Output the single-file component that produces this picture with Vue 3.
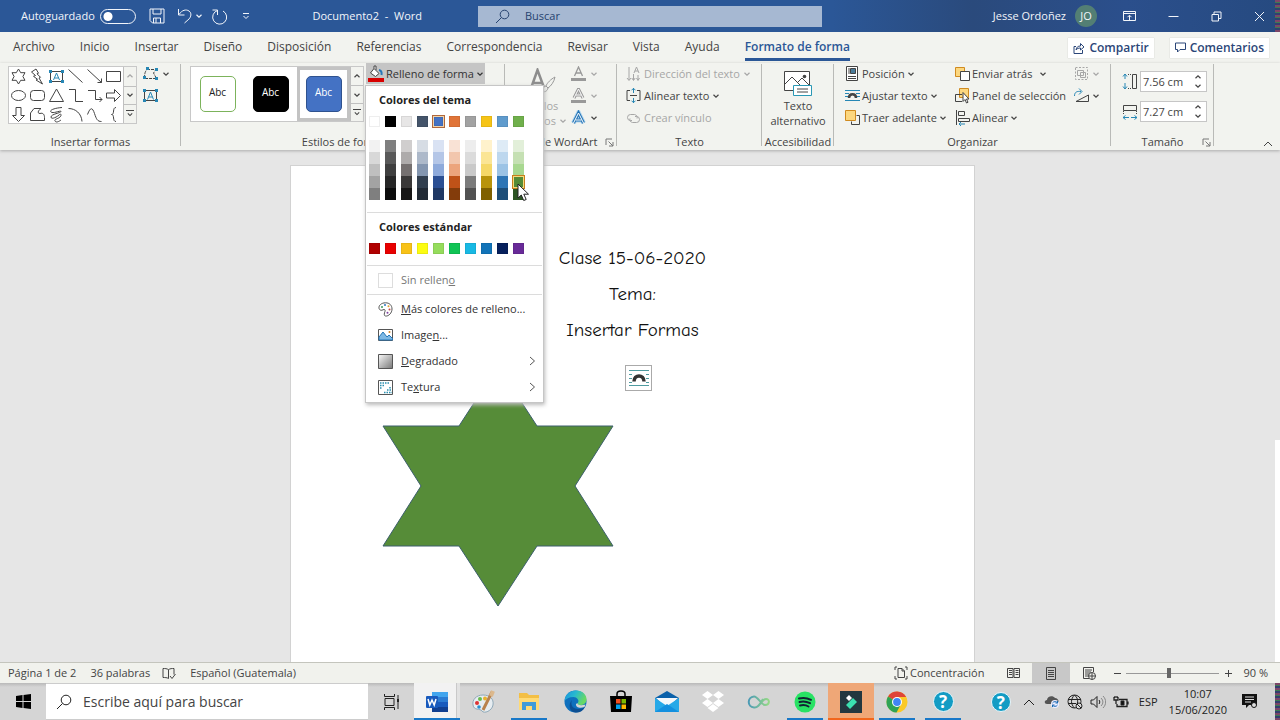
<script setup>
import { h, ref } from 'vue'

const Chev = () =>
  h('svg', { class: 'chev', width: 8, height: 8, viewBox: '0 0 8 8' }, [
    h('path', { d: 'M1.500 2.800 4 5.200 6.500 2.800', fill: 'none', stroke: 'currentColor', 'stroke-width': 1.2 }),
  ])

const Launcher = () =>
  h('svg', { class: 'launcher', width: 9, height: 9, viewBox: '0 0 9 9' }, [
    h('path', { d: 'M1 7V1h6M3.500 3.500 8 8M8 4v4H4', fill: 'none', stroke: 'currentColor' }),
  ])

const tabs = ['Archivo', 'Inicio', 'Insertar', 'Diseño', 'Disposición', 'Referencias', 'Correspondencia', 'Revisar', 'Vista', 'Ayuda', 'Formato de forma']

const shapes = [
  { name: 'Estrella', d: 'M9.500 2l2.200 3.700h4.300l-2.100 3.800 2.100 3.800h-4.300l-2.200 3.700-2.200-3.700H3l2.100-3.800L3 5.700h4.300z' },
  { name: 'Rayo', d: 'M8 2 3.500 5l4 3.500-2 .8 4 3-1.500.7 6.500 4-3.500-6 1.500-.7-3.500-3.500 1.500-.6z' },
  { name: 'Cuadro de texto', box: true },
  { name: 'Línea', d: 'M2.500 2.500l14 13' },
  { name: 'Flecha', d: 'M2.500 2.500l14 13M16.500 11.500v4h-4' },
  { name: 'Rectángulo', d: 'M2.500 4.500h14v10h-14z' },
  { name: 'Elipse', d: 'M2.500 9.500a7 5 0 1 0 14 0a7 5 0 1 0-14 0z' },
  { name: 'Rectángulo redondeado', d: 'M5.500 4.500h8a3 3 0 0 1 3 3v4a3 3 0 0 1-3 3h-8a3 3 0 0 1-3-3v-4a3 3 0 0 1 3-3z' },
  { name: 'Triángulo', d: 'M9.500 3l7 12.500h-14z' },
  { name: 'Conector', d: 'M3 3.500h6.500v12H17' },
  { name: 'Conector de flecha', d: 'M3 4.500h7.500v9H17M14.500 11l2.500 2.500-2.500 2.500' },
  { name: 'Flecha derecha', d: 'M2.500 7h8V3.500l6 6-6 6V12h-8z' },
  { name: 'Flecha abajo', d: 'M7 2.500h5v8h3.500l-6 6-6-6H7z' },
  { name: 'Forma libre', d: 'M2.500 15.500V8l3.500-4.500h7c-3 2-4 5-1 5 3-1 4.500 1 4.500 4v3z' },
  { name: 'Garabato', d: 'M15 2.500C8 3 2 5 4 7s10-2 10-.5S4 9 4 12s6 0 8-2 3 0 1 2-6 2-5 4 4 .500 6-1' },
  { name: 'Arco', d: 'M2.500 3.500c7 0 13 5 13.500 13' },
  { name: 'Curva', d: 'M2.500 9.500c3-8 5-7 7-1s3 8 7 8' },
  { name: 'Llave', d: 'M12 2.500c-4 0-1 7-4.500 7 3.500 0 .500 7 4.500 7' },
]

const theme = ['#ffffff', '#000000', '#e7e6e6', '#44546a', '#4472c4', '#e07438', '#a2a2a2', '#f6c416', '#5f9bcd', '#70b04c']
const shades = [
  ['#f2f2f2', '#d8d8d8', '#bfbfbf', '#a3a3a3', '#7f7f7f'],
  ['#7f7f7f', '#595959', '#3f3f3f', '#262626', '#0c0c0c'],
  ['#d0cece', '#aeabab', '#757070', '#3a3838', '#171616'],
  ['#d6dce4', '#adb9ca', '#8496b0', '#323f4f', '#222a35'],
  ['#d9e2f3', '#b4c6e7', '#8eaadb', '#2b4f93', '#1f3864'],
  ['#f9e2d5', '#f2c6ad', '#eca47c', '#bf5218', '#833c0b'],
  ['#ededed', '#dbdbdb', '#c9c9c9', '#7b7b7b', '#525252'],
  ['#fff2cc', '#fbe595', '#f5d868', '#b8930b', '#7f6000'],
  ['#deebf6', '#bdd7ee', '#9cc3e5', '#2e75b5', '#1e4e79'],
  ['#e2efd9', '#c5e0b3', '#a8d890', '#558b37', '#2c5423'],
]
const standard = ['#b00000', '#e80000', '#f8c218', '#fcfc12', '#95dc5c', '#10c455', '#18b9e4', '#1173b8', '#06205c', '#682a98']

const fileName = ref('Documento2  -  Word')
const alto = ref('7.56 cm')
const ancho = ref('7.27 cm')
const zoom = ref(46)
</script>

<template>
  <div class="window">
    <header class="title">
      <div class="title-left">
        <label class="auto">Autoguardado <input type="checkbox" class="switch" /></label>
        <button aria-label="Guardar" class="tb save">
          <svg width="16" height="16" viewBox="0 0 16 16"><path d="M1 1h14v14H3.500L1 12.500zM4 1v5h8V1M4.500 15v-5h7v5M7 10v5" /></svg>
        </button>
        <button aria-label="Deshacer" class="tb undo">
          <svg width="16" height="16" viewBox="0 0 16 16"><path d="M1.500 1v6h6M2 6.500C5 2 9 1 12 3s2 6 0 8l-4.500 4" /></svg><Chev />
        </button>
        <button aria-label="Rehacer" class="tb redo">
          <svg width="17" height="17" viewBox="0 0 17 17"><path d="M1.500 2h5v5M6.500 2.500A7 7 0 1 0 12 3" /></svg>
        </button>
        <button aria-label="Personalizar" class="tb">
          <svg width="8" height="8" viewBox="0 0 8 8"><path d="M1 1.500h6M1.500 4 4 6.500 6.500 4" /></svg>
        </button>
        <span class="file">{{ fileName }}</span>
      </div>
      <label class="find">
        <svg width="15" height="15" viewBox="0 0 15 15"><circle cx="9.500" cy="5.500" r="4.300" /><path d="M6.500 8.500 1 14" /></svg>
        <input type="search" placeholder="Buscar" aria-label="Buscar" />
      </label>
      <div class="title-right">
        <span>Jesse Ordoñez</span>
        <span class="avatar">JO</span>
        <button class="tb" aria-label="Opciones de la cinta"><svg width="13" height="11" viewBox="0 0 13 11"><path d="M.500.500h12v9H.500zM.500 2.500h12M6.500 9V4.500M4.500 6.200l2-2 2 2" /></svg></button>
        <button class="tb" aria-label="Minimizar"><svg width="11" height="11" viewBox="0 0 11 11"><path d="M.500 5.500h10" /></svg></button>
        <button class="tb" aria-label="Restaurar"><svg width="11" height="11" viewBox="0 0 11 11"><path d="M1 3.500h6.500V10H1zM3 3.500V1h7v6.500H7.500" /></svg></button>
        <button class="tb" aria-label="Cerrar"><svg width="11" height="11" viewBox="0 0 11 11"><path d="M1 1l9 9M10 1l-9 9" /></svg></button>
      </div>
      <i class="edge"></i>
    </header>

    <nav class="tabs">
      <button v-for="t in tabs" :key="t" class="tab" :class="{ active: t === 'Formato de forma' }">{{ t }}</button>
      <div class="share">
        <button>
          <svg width="12" height="12" viewBox="0 0 12 12"><path d="M3 4.500H1v7h8.500V8M3 8c.5-3 2-4 4.500-4V1.500L11 5 7.500 8V6C5.500 6 4 6.500 3 8z" /></svg>Compartir
        </button>
        <button>
          <svg width="11" height="11" viewBox="0 0 11 11"><path d="M.500 1h10v6.500H5L2.500 10V7.500h-2z" /></svg>Comentarios
        </button>
      </div>
    </nav>

    <section class="ribbon">
      <div class="group g-shapes">
        <div class="content">
          <div class="gallery">
            <div class="shapes">
              <button v-for="s in shapes" :key="s.name" :aria-label="s.name">
                <svg width="19" height="19" viewBox="0 0 19 19">
                  <template v-if="s.box">
                    <path d="M3.500 4.500h12v10h-12z" />
                    <path class="blue" d="M6.500 13 9.500 6l3 7M7.500 11h4" />
                    <path class="dots" d="M2 3h3v3H2zM14 3h3v3h-3zM2 13h3v3H2zM14 13h3v3h-3z" />
                  </template>
                  <path v-else :d="s.d" />
                </svg>
              </button>
            </div>
            <div class="scroll">
              <button aria-label="Arriba" class="up off"><Chev /></button>
              <button aria-label="Abajo"><Chev /></button>
              <button aria-label="Más formas" class="more"><Chev /></button>
            </div>
          </div>
          <div class="edit">
            <button class="row" aria-label="Editar forma">
              <svg width="16" height="14" viewBox="0 0 16 14"><path d="M4 2.500h9L10.500 6l3 5.500h-12C1.500 7 2 4.500 4 2.500z" stroke-dasharray="3 1" /><path class="dots" d="M3 0h3v3H3zM12 1h3v3h-3zM0 9h3v3H0zM12 10h3v3h-3z" /></svg><Chev />
            </button>
            <button class="row" aria-label="Dibujar cuadro de texto">
              <svg width="16" height="14" viewBox="0 0 16 14"><path d="M1.500 1.500h12v10h-12z" /><path class="blue" d="M4.500 10.500 7.500 3l3 7.500M5.500 8h4" /><path class="dots" d="M0 0h3v3H0zM12 0h3v3h-3zM0 10h3v3H0zM12 10h3v3h-3z" /></svg>
            </button>
          </div>
        </div>
        <div class="caption"><span>Insertar formas</span></div>
      </div>

      <div class="group g-styles">
        <div class="content">
          <div class="gallery presets">
            <div class="slot"><button class="preset outline">Abc</button></div>
            <div class="slot"><button class="preset black">Abc</button></div>
            <div class="slot chosen"><button class="preset fill">Abc</button></div>
            <div class="scroll">
              <button aria-label="Anterior" class="up"><Chev /></button>
              <button aria-label="Siguiente"><Chev /></button>
              <button aria-label="Más estilos" class="more"><Chev /></button>
            </div>
          </div>
          <div class="filler">
            <button class="fillbtn">
              <svg width="16" height="17" viewBox="0 0 16 17"><path d="M6 3.500 11 8.500 7.500 11.500 2.500 8zM6 3.500V1h2v4" fill="#fff" stroke="#444" /><path d="M11 5c2.500.500 3 2 2.500 5" fill="none" stroke="#2476b8" stroke-width="2" /><path d="M0 13h16v4H0z" fill="#d80000" /></svg>
              Relleno de forma <Chev />
            </button>
            <div class="menu">
              <h3>Colores del tema</h3>
              <div class="swatches">
                <button v-for="(c, i) in theme" :key="c" :aria-label="'Tema ' + (i + 1)" :class="{ picked: i === 4 }" :style="{ background: c }"></button>
              </div>
              <div class="shades">
                <div v-for="(col, i) in shades" :key="i">
                  <button v-for="(c, j) in col" :key="c" :aria-label="'Tono ' + (i + 1) + '.' + (j + 1)" :class="{ hot: i === 9 && j === 3 }" :style="{ background: c }"></button>
                </div>
                <svg class="cursor" width="13" height="19" viewBox="0 0 13 19"><path d="M1 1v14l3.300-3 2.400 5.500 2.500-1-2.400-5.300H11.500z" fill="#fff" stroke="#222" /></svg>
              </div>
              <hr />
              <h3>Colores estándar</h3>
              <div class="swatches std">
                <button v-for="(c, i) in standard" :key="c" :aria-label="'Estándar ' + (i + 1)" :style="{ background: c }"></button>
              </div>
              <hr />
              <button class="item none"><i class="empty"></i><span>Sin rellen<u>o</u></span></button>
              <hr />
              <div class="items">
                <button class="item">
                  <svg width="15" height="15" viewBox="0 0 15 15"><path d="M7.500.800c-4 0-7 2.500-6.500 5.500.5 2 2.500 2.500 4 1.500 1.500-.8 2.500 0 2 1.500-.8 2-1.300 4.500.5 4.700 3 .5 6.500-3 6.500-7 0-3.700-2.500-6.200-6.500-6.200z" fill="#fff" stroke="#555" /><g stroke="none"><circle cx="4" cy="5" r="1" fill="#3a9a5c" /><circle cx="7" cy="3" r="1" fill="#2f78c0" /><circle cx="10.500" cy="4.200" r="1" fill="#e0a030" /><circle cx="11.500" cy="7.500" r="1" fill="#c84040" /><circle cx="9.500" cy="10.800" r="1" fill="#8040a0" /></g></svg>
                  <span><u>M</u>ás colores de relleno...</span>
                </button>
                <button class="item">
                  <svg width="15" height="12" viewBox="0 0 15 12"><path d="M.500.500h14v11H.500z" fill="#fff" stroke="#555" /><path d="M1 8l4-5 4 5 2-2 3.500 3.500V11H1z" fill="#7db8e4" stroke="#2476b8" /><circle cx="11.500" cy="3" r="1" fill="#d08020" /></svg>
                  <span>Image<u>n</u>...</span>
                </button>
                <button class="item">
                  <svg width="15" height="15" viewBox="0 0 15 15"><defs><linearGradient id="gris" x1="0" y1="0" x2="1" y2="1"><stop offset="0" stop-color="#fafafa" /><stop offset="1" stop-color="#777" /></linearGradient></defs><path d="M.500.500h14v14H.500z" fill="url(#gris)" stroke="#555" /></svg>
                  <span><u>D</u>egradado</span><svg class="go" width="7" height="10" viewBox="0 0 7 10"><path d="M1 1l4.500 4L1 9" /></svg>
                </button>
                <button class="item">
                  <svg width="15" height="15" viewBox="0 0 15 15"><path d="M.500.500h14v14H.500z" fill="#fff" stroke="#555" /><path d="M2 3h9M2 5.500h5M2 8h2M12 7v2M9 10h5M6 12.500h8" fill="none" stroke="#2a8fb0" stroke-width="1.500" stroke-dasharray="1.500 1" /></svg>
                  <span>Te<u>x</u>tura</span><svg class="go" width="7" height="10" viewBox="0 0 7 10"><path d="M1 1l4.500 4L1 9" /></svg>
                </button>
              </div>
            </div>
          </div>
        </div>
        <div class="caption"><span>Estilos de forma</span></div>
      </div>

      <div class="group g-art">
        <div class="content">
          <button class="big off">
            <svg width="28" height="30" viewBox="0 0 28 30"><path d="M2 23 9.500 2l7 19M5 15h9" fill="none" stroke="#8d8d8d" stroke-width="2.500" /><path d="M27 9c-4 2-8 6-9 9l2 2c3-2 6-6 7-11zM18 18c-3 0-2 4-5 5 3 1.500 6 1 7-3" fill="#f1f2ee" stroke="#999" /></svg>
            <span>Estilos<br />rápidos <Chev /></span>
          </button>
          <div class="letters">
            <button class="row off" aria-label="Relleno de texto"><svg width="15" height="16" viewBox="0 0 15 16"><path d="M3.500 10 7.500 1l4 9M5 7h5" fill="none" stroke="#999" stroke-width="1.300" /><path d="M0 12h15v3H0z" fill="#999" stroke="none" /></svg><Chev /></button>
            <button class="row off" aria-label="Contorno de texto"><svg width="15" height="16" viewBox="0 0 15 16"><path class="ring" d="M3 10 7.500 1 12 10M5 7h5" /><path class="core" d="M3 10 7.500 1 12 10M5 7h5" /><path d="M0 12h15v3H0z" fill="#999" stroke="none" /></svg><Chev /></button>
            <button class="row" aria-label="Efectos de texto"><svg width="15" height="16" viewBox="0 0 15 16"><path class="glow" d="M2.500 13 7.500 3l5 10M4.500 10h6" /><path class="ink" d="M2.500 13 7.500 3l5 10M4.500 10h6" /><path class="core" d="M2.500 13 7.500 3l5 10M4.500 10h6" /></svg><Chev /></button>
          </div>
        </div>
        <div class="caption"><span>Estilos de WordArt</span><Launcher /></div>
      </div>

      <div class="group g-text">
        <div class="content">
          <div class="rows">
            <button class="row off"><svg width="15" height="16" viewBox="0 0 15 16"><path d="M3 1v13M1 12l2 2.500L5 12M7.500 14V8M5.800 12l1.700 2.500L9.200 12M8 7l2.500-6L13 7M9 5h3M12 9v5M10.500 12l1.500 2.500 1.500-2.500" /></svg>Dirección del texto <Chev /></button>
            <button class="row"><svg width="15" height="16" viewBox="0 0 15 16"><path d="M4 2.500H1v10h3M11 2.500h3v10h-3M4 7.500h7" /><path class="blue" d="M7.500 0v5M5.500 2.300l2-2 2 2M7.500 10v5M5.500 12.700l2 2 2-2" /></svg>Alinear texto <Chev /></button>
            <button class="row off"><svg width="15" height="16" viewBox="0 0 15 16"><path d="M6 10.500H4.500a3 3 0 0 1 0-6h4a3 3 0 0 1 2.500 4M9 6.500h1.500a3 3 0 0 1 0 6h-4a3 3 0 0 1-2.500-4" /></svg>Crear vínculo</button>
          </div>
        </div>
        <div class="caption"><span>Texto</span></div>
      </div>

      <div class="group g-alt">
        <div class="content">
          <button class="big">
            <svg width="28" height="28" viewBox="0 0 28 28"><path d="M.500 1.500h25v19H.500z" fill="#fff" stroke="#444" /><path d="M1 14l7-7 9 9M14 12l4-4 7 7" fill="none" stroke="#444" /><circle cx="20.500" cy="6.500" r="1.800" fill="#444" /><path d="M9.500 15.500h18v10h-18z" fill="#fff" stroke="#2a98b5" /><path d="M13 19h11M13 22h11" stroke="#444" /></svg>
            <span>Texto<br />alternativo</span>
          </button>
        </div>
        <div class="caption"><span>Accesibilidad</span></div>
      </div>

      <div class="group g-org">
        <div class="content">
          <div class="rows c1">
            <button class="row"><svg width="15" height="16" viewBox="0 0 15 16"><path d="M1.500.500h11v14h-11z" fill="#fff" /><path d="M3 3h2M3 5h2M3 7h2M3 10.500h8M3 12.500h8" /><path d="M5.500 2.500h5v5h-5z" fill="#4a7c9a" /></svg>Posición <Chev /></button>
            <button class="row"><svg width="15" height="16" viewBox="0 0 15 16"><path class="blue" d="M0 2.500h15M0 5.500h4M11 5.500h4M0 8.500h3M12 8.500h3M0 12.500h15" /><path class="arch" d="M4 10c0-5 7-5 7 0" /></svg>Ajustar texto <Chev /></button>
            <button class="row"><svg width="15" height="16" viewBox="0 0 15 16"><path d="M11.500 5.500h3v9h-8v-3" /><path class="gold" d="M.500.500h10v10H.500z" /></svg>Traer adelante <Chev /></button>
          </div>
          <div class="rows c2">
            <button class="row"><svg width="15" height="16" viewBox="0 0 15 16"><path class="gold" d="M.500 1.500h9v9h-9z" /><path d="M5.500 5.500h9v9h-9z" fill="#fff" /></svg>Enviar atrás <Chev class="mid" /></button>
            <button class="row"><svg width="15" height="16" viewBox="0 0 15 16"><path class="gold" d="M4.500.500h9v9h-9z" /><path d="M7 6.500H.500v7H7" /><path d="M8 4.500v9l2-2 1.500 3.500 1.500-.7-1.500-3.300H14z" fill="#fff" /></svg>Panel de selección</button>
            <button class="row"><svg width="15" height="16" viewBox="0 0 15 16"><path d="M1.500 0v15M3.500 1.500h6v4h-6zM3.500 8.500h11v3h-11z" /><path class="blue" d="M4 14h6M6 12l-2 2 2 2" /></svg>Alinear <Chev /></button>
          </div>
          <div class="rows c3">
            <button class="row off" aria-label="Agrupar"><svg width="15" height="16" viewBox="0 0 15 16"><path d="M1.500 1.500h12v12h-12z" stroke-dasharray="2 1.500" /><path d="M3.500 4.500h6v5h-6zM6.500 6.500h5v5h-5z" /></svg><Chev /></button>
            <button class="row" aria-label="Girar"><svg width="15" height="16" viewBox="0 0 15 16"><path d="M2 13.500 14.500 7v6.500z" /><path class="blue" d="M.500 8C.500 4 3 3 7 3.500M5 .500l3 3-3 3" /></svg><Chev /></button>
          </div>
        </div>
        <div class="caption"><span>Organizar</span></div>
      </div>

      <div class="group g-size">
        <div class="content">
          <label class="size">
            <svg width="16" height="17" viewBox="0 0 16 17"><path class="blue" d="M3 1v5M1 3.500l2-2.500 2 2.500M3 10v6M1 13.500 3 16l2-2.500" /><path d="M10.500 1.500h4v14h-4z" /><path d="M6 1.500h4M6 15.500h4" stroke-dasharray="1 1" /></svg>
            <input v-model="alto" aria-label="Alto" />
            <span class="spin"><button aria-label="Aumentar alto" class="up"><Chev /></button><button aria-label="Reducir alto"><Chev /></button></span>
          </label>
          <label class="size">
            <svg width="16" height="17" viewBox="0 0 16 17"><path d="M1.500 2.500h13v5h-13z" /><path d="M1.500 8v4M14.500 8v4" stroke-dasharray="1 1" /><path class="blue" d="M7 14.500H1M3.500 12.500l-2.500 2 2.500 2M9 14.500h6M12.500 12.500l2.500 2-2.500 2" /></svg>
            <input v-model="ancho" aria-label="Ancho" />
            <span class="spin"><button aria-label="Aumentar ancho" class="up"><Chev /></button><button aria-label="Reducir ancho"><Chev /></button></span>
          </label>
        </div>
        <div class="caption"><span>Tamaño</span><Launcher /></div>
      </div>

      <button class="collapse" aria-label="Contraer la cinta"><svg width="10" height="7" viewBox="0 0 10 7"><path d="M1 6l4-4 4 4" /></svg></button>
    </section>

    <main class="canvas">
      <article class="page">
        <p>Clase 15-06-2020</p>
        <p>Tema:</p>
        <p>Insertar Formas</p>
        <svg class="star" width="232" height="242" viewBox="0 0 232 242"><path d="M116 1l39 60h76l-38 60 38 60h-76l-39 60-39-60H1l38-60L1 61h76z" fill="#568c38" stroke="#3c5f6c" /></svg>
        <button class="layout" aria-label="Opciones de diseño">
          <svg width="22" height="18" viewBox="0 0 22 18"><path d="M1 1.500h20M1 5.500h3M18 5.500h3M1 9.500h3M18 9.500h3M1 13.500h3M18 13.500h3M1 16.500h20" stroke="#4f9ba0" /><path d="M6 12.500c0-7.500 10-7.500 10 0" stroke="#333" stroke-width="3.500" fill="none" /></svg>
        </button>
      </article>
      <i class="beside"></i>
    </main>

    <footer class="status">
      <span>Página 1 de 2</span>
      <span>36 palabras</span>
      <button aria-label="Revisión" class="proof"><svg width="14" height="13" viewBox="0 0 14 13"><path d="M6.500 11.500C5 10.500 3 10.500 1 10.500v-9c2 0 4 0 5.500 1.200C8 1.500 10 1.500 12 1.500v6M6.500 2.500v9M8 9l2 2.500L13.500 7" /></svg></button>
      <span>Español (Guatemala)</span>
      <button class="focus"><svg width="14" height="14" viewBox="0 0 14 14"><path d="M1 4V1h2M11 1h2v3M1 10v3h2M11 13h2v-3M4 2.500h4l2.500 2.500v6.500H4zM8 2.500V5h2.500" /></svg>Concentración</button>
      <button class="view" aria-label="Modo de lectura"><svg width="13" height="12" viewBox="0 0 13 12"><path d="M.500 1.500h5.500v9H.500zM7 1.500h5.500v9H7zM2 3.500h3M2 5.500h3M2 7.500h3M8.500 3.500h3M8.500 5.500h3M8.500 7.500h3" /></svg></button>
      <button class="view on" aria-label="Diseño de impresión"><svg width="13" height="13" viewBox="0 0 13 13"><path d="M1.500.500h9v12h-9zM3 3.500h6M3 5.500h6M3 7.500h6M3 9.500h6" /></svg></button>
      <button class="view" aria-label="Diseño web"><svg width="13" height="13" viewBox="0 0 13 13"><path d="M6 11.500H.500v-11h10V5M2 3h7M2 5h6M2 7h4M2 9h3" /><circle cx="9" cy="9" r="3.500" /><path d="M5.500 9h7M9 5.500v7" /></svg></button>
      <button class="sign" aria-label="Alejar"><svg width="9" height="9" viewBox="0 0 9 9"><path d="M1 4.500h7" /></svg></button>
      <input v-model="zoom" class="zoom" type="range" min="0" max="100" aria-label="Zoom" />
      <button class="sign" aria-label="Acercar"><svg width="9" height="9" viewBox="0 0 9 9"><path d="M1 4.500h7M4.500 1v7" /></svg></button>
      <span class="percent">90 %</span>
    </footer>

    <nav class="taskbar">
      <button class="start" aria-label="Inicio"><svg width="15" height="15" viewBox="0 0 15 15"><path d="M0 2l6.500-1v6H0zM7.500 1 15 0v7H7.500zM0 8h6.500v6L0 13zM7.500 8H15v7l-7.500-1z" fill="#000" /></svg></button>
      <label class="ask">
        <svg width="16" height="16" viewBox="0 0 16 16"><circle cx="10" cy="6" r="4.800" /><path d="M6.500 9.500 1 15" /></svg>
        <input type="search" placeholder="Escribe aquí para buscar" aria-label="Escribe aquí para buscar" />
      </label>
      <button class="app" aria-label="Vista de tareas"><svg width="17" height="16" viewBox="0 0 17 16"><path d="M2 4.500h9v7H2zM1.500 0v2.500h10V0M1.500 16v-2.500h10V16M15 1v14" fill="none" stroke="#222" /><path d="M14 5h2v3h-2z" fill="#222" /></svg></button>
      <button class="app front run" aria-label="Word"><svg width="24" height="22" viewBox="0 0 24 22"><rect x="7" y="1" width="16" height="20" rx="1" fill="#2b7cd3" /><path d="M7 1h16v5H7z" fill="#41a5ee" /><path d="M7 11h16v5H7z" fill="#185abd" /><path d="M7 16h16v5H7z" fill="#103f91" /><rect x="1" y="5" width="12" height="12" rx="1" fill="#185abd" /><path d="M3 8l1.800 6L7 9l2.200 5L11 8" fill="none" stroke="#fff" stroke-width="1.500" /></svg></button>
      <button class="app" aria-label="Paint"><svg width="24" height="24" viewBox="0 0 24 24"><path d="M12 5C5 5 1 10 2 15c1 6 7 3 9 6s10 0 11-6S19 5 12 5z" fill="#e7edf1" stroke="#90a9b8" /><circle cx="6" cy="13" r="2" fill="#d33" /><circle cx="9" cy="9" r="2" fill="#68bb4f" /><circle cx="14" cy="8.500" r="2" fill="#eab12e" /><circle cx="8" cy="17" r="1.800" fill="#2b8fd0" /><path d="M21 2 12 20" stroke="#b9824d" stroke-width="3" /><path d="M22 1l-2 5" stroke="#dcb88c" stroke-width="4" /></svg></button>
      <button class="app run" aria-label="Explorador"><svg width="22" height="20" viewBox="0 0 22 20"><path d="M1 1h8l2 2h10v15H1z" fill="#f3bf45" /><path d="M1 6h20v12H1z" fill="#ffda75" /><path d="M4 18v-8h14v8h-4v-4H8v4z" fill="#3f9bd8" /></svg></button>
      <button class="app" aria-label="Edge"><svg width="23" height="23" viewBox="0 0 23 23"><defs><linearGradient id="mar" x1="0" y1="0" x2="1" y2=".4"><stop offset="0" stop-color="#1a8fe0" /><stop offset=".5" stop-color="#28b9cf" /><stop offset="1" stop-color="#68d963" /></linearGradient></defs><circle cx="11.500" cy="11.500" r="11" fill="#0f70bd" /><path d="M.500 11C1 4 6 .500 12 .500c7 0 11 5 10.500 9.500-.4 4-4 5.500-7 5-2-.3-2.500-1.200-1.500-2.500 1.500-2-1-5.500-4.500-5.500C5 7 2 9 .500 11z" fill="url(#mar)" /><path d="M8 10c-2 5 1 9 6 9 3 0 5-.7 7-2-2 4-6 6-9.500 5.500C5 22 4 14 8 10z" fill="#0d4f92" /><path d="M13.500 13c-.3 2 3 3 8 1.500l-1 2.500c-5 2-9 0-8.500-3z" fill="#d5d5d5" /></svg></button>
      <button class="app" aria-label="Tienda"><svg width="22" height="23" viewBox="0 0 22 23"><path d="M7 7V4c0-4 8-4 8 0v3" fill="none" stroke="#000" stroke-width="1.500" /><path d="M0 6h22l-1 16H1z" fill="#000" /><path d="M6 9h4.500v4.500H6z" fill="#f25022" /><path d="M11.500 9H16v4.500h-4.500z" fill="#7fba00" /><path d="M6 14.500h4.500V19H6z" fill="#00a4ef" /><path d="M11.500 14.500H16V19h-4.500z" fill="#ffb900" /></svg></button>
      <button class="app" aria-label="Correo"><svg width="24" height="22" viewBox="0 0 24 22"><path d="M0 7 12 0l12 7v5H0z" fill="#0b61aa" /><path d="M1 7h22l-8 8H9z" fill="#f5f8fb" /><path d="M0 7l12 8 12-8v14H0z" fill="#27a9e8" /><path d="M0 21 12 13l12 8z" fill="#1490df" /></svg></button>
      <button class="app" aria-label="Dropbox"><svg width="24" height="22" viewBox="0 0 24 22"><path d="M6.500 0 12 4 6.500 8 1 4zM17.500 0 23 4l-5.500 4L12 4zM6.500 8l5.500 4-5.500 4L1 12zM17.500 8l5.500 4-5.500 4-5.500-4zM12 13l5.500 4L12 21l-5.500-4z" fill="#fff" /></svg></button>
      <button class="app" aria-label="Conexión"><svg width="24" height="14" viewBox="0 0 24 14"><defs><linearGradient id="lazo"><stop offset="0" stop-color="#4c9bb5" /><stop offset="1" stop-color="#95d985" /></linearGradient></defs><path d="M16 4C12 11 10 13 7 12.500 0 12 0 2 7 1.500c4-.2 7 8.500 11 8.500 5 0 5-6 1-6-3 0-4 3-6 5" fill="none" stroke="url(#lazo)" stroke-width="2" /></svg></button>
      <button class="app run" aria-label="Spotify"><svg width="22" height="22" viewBox="0 0 22 22"><circle cx="11" cy="11" r="10.500" fill="#28e264" /><path d="M5 7.500c4-1 8-.7 12 1.300M5.500 11c3.500-1 7-.6 10.500 1.200M6 14.500c3-.7 6-.5 8.500 1" fill="none" stroke="#123" stroke-width="2" stroke-linecap="round" /></svg></button>
      <button class="app orange run" aria-label="Filmora"><svg width="22" height="22" viewBox="0 0 22 22"><path d="M0 0h22v22H0z" fill="#23373f" /><path d="M9 4l3 3-3 3-3-3z" fill="#fff" /><path d="M13 7l4 4-7 7-4-4z" fill="#3be0b0" /></svg></button>
      <button class="app run" aria-label="Chrome"><svg width="22" height="22" viewBox="0 0 22 22"><circle cx="11" cy="11" r="10.500" fill="#fbc926" /><path d="M11 11 2 5.500A10.500 10.500 0 0 1 20.200 6H11z" fill="#df4437" /><path d="M11 11 2 5.500A10.500 10.500 0 0 0 10.500 21.500L15 13z" fill="#2fa355" /><circle cx="11" cy="11" r="5" fill="#fff" /><circle cx="11" cy="11" r="3.900" fill="#4285f4" /></svg></button>
      <button class="app run" aria-label="Ayuda"><span class="help">?</span></button>
      <div class="tray">
        <span class="help small">?</span>
        <svg class="line" width="12" height="8" viewBox="0 0 12 8"><path d="M1 7l5-5 5 5" /></svg>
        <svg width="16" height="15" viewBox="0 0 16 15"><path d="M3 10C0 10 0 6 3 6c0-4 6-5 8-2 4 0 5 6 2 6z" fill="#555" /><circle cx="11" cy="10" r="4" fill="#eef" /><path d="M8.500 9a3 3 0 0 1 5 0M13.500 11a3 3 0 0 1-5 0M13.500 7v2h-2M8.500 13v-2h2" fill="none" stroke="#1769b5" /></svg>
        <svg class="line" width="16" height="16" viewBox="0 0 16 16"><circle cx="7.500" cy="7.500" r="6.500" /><path d="M1 5.500h13M1 9.500h8M7.500 1c-4 4-4 9 0 13M7.500 1c3 3 3.500 5 3 8" /><circle cx="12" cy="12" r="3" fill="#ddd" /><path d="M10 10l4 4" /></svg>
        <svg class="line" width="16" height="14" viewBox="0 0 16 14"><path d="M1 5h2.500L7 1.500v11L3.500 9H1zM9 5c1 1.300 1 2.700 0 4" /><path d="M11 3c2.500 2.500 2.500 5.500 0 8M13 1c3.500 3.500 3.500 8.500 0 12" stroke="#888" /></svg>
        <svg class="line" width="16" height="12" viewBox="0 0 16 12"><path d="M6 3.500h8v7H4V8M15 5.500v3M1 1v3h4V1M2 0v2M4 0v2M3 4v4" stroke-width="1.300" /><path d="M8 5h3v4H8z" fill="#111" /></svg>
        <span class="lang">ESP</span>
        <span class="clock">10:07<br />15/06/2020</span>
        <svg width="16" height="15" viewBox="0 0 16 15"><path d="M0 0h15v11H7l-3 3v-3H0z" fill="#111" /><path d="M3 3h9M3 5.500h9M3 8h6" stroke="#ddd" /><circle cx="12" cy="11" r="2.500" fill="#ddd" stroke="#111" /></svg>
      </div>
      <i class="edge"></i>
    </nav>
  </div>
</template>

<style>
body {
  margin: 0;
}
</style>

<style scoped>
.window {
  display: flex;
  flex-direction: column;
  min-height: 100vh;
  overflow: hidden;
  background: #e6e6e6;
  color: #444;
  font: 11px/16px "Open Sans", "Noto Sans", sans-serif;
}
.window * {
  box-sizing: border-box;
}
button, input {
  font: inherit;
  color: inherit;
  background: none;
  border: 0;
  padding: 0;
  margin: 0;
  border-radius: 0;
  outline: 0;
}
button {
  white-space: nowrap;
}
svg {
  display: block;
  flex: none;
}
.chev.chev {
  display: inline-block;
}
.up .chev {
  transform: rotate(180deg);
}

/* title bar */
.title {
  position: relative;
  display: grid;
  grid-template-columns: 478fr 344fr 458fr;
  align-items: center;
  height: 32px;
  background: linear-gradient(90deg, #2b5797 65%, #2a4a7c 76%, #2b4f8c 88%, #264a80);
  color: #f2f5fa;
}
.title-left, .title-right {
  display: flex;
  align-items: center;
}
.title-left {
  padding-left: 21px;
}
.title svg {
  fill: none;
  stroke: currentColor;
}
.auto {
  display: flex;
  align-items: center;
  gap: 5px;
}
.switch {
  appearance: none;
  width: 36px;
  height: 15px;
  border: 1px solid #f2f5fa;
  border-radius: 8px;
  background: radial-gradient(circle at 7px 50%, #fff 4px, transparent 5px);
}
.tb {
  display: flex;
  align-items: center;
}
.save { margin-left: 13px; }
.undo { margin: 0 8px 0 12px; gap: 2px; }
.redo { margin-right: 14px; }
.file {
  margin-left: auto;
  padding-right: 56px;
  white-space: pre;
}
.find {
  display: flex;
  align-items: center;
  gap: 15px;
  height: 21px;
  padding-left: 17px;
  background: #a6b8d2;
  color: #27436f;
}
.find input {
  flex: 1;
  min-width: 0;
}
::placeholder {
  color: inherit;
  opacity: 1;
}
.title-right {
  justify-content: flex-end;
  padding-right: 15px;
  gap: 32px;
}
.avatar {
  display: grid;
  place-items: center;
  width: 22px;
  height: 22px;
  margin: 0 -6px 0 -23px;
  border-radius: 50%;
  background: #537f74;
}
.edge {
  position: absolute;
  right: 0;
  top: 0;
  bottom: 0;
  width: 5px;
  background: repeating-linear-gradient(#7d4668 0 2px, #3f7a52 2px 3px, #33406f 3px 5px);
}

/* tabs */
.tabs {
  display: flex;
  align-items: center;
  gap: 25px;
  height: 31px;
  padding: 0 11px 0 13px;
  background: #f2f3ef;
  font-size: 12px;
}
.tab {
  height: 27px;
  border-bottom: 3px solid transparent;
  padding-top: 1px;
}
.tab.active {
  color: #2b5797;
  border-color: #2b5797;
  font-weight: 600;
}
.share {
  display: flex;
  gap: 16px;
  margin-left: auto;
}
.share button {
  display: flex;
  align-items: center;
  gap: 4px;
  height: 20px;
  padding: 0 5px;
  background: #fff;
  box-shadow: 0 0 1px #bbb;
  color: #2b4678;
  font-weight: 600;
}
.share svg {
  fill: none;
  stroke: currentColor;
}

/* ribbon */
.ribbon {
  position: relative;
  z-index: 2;
  display: flex;
  height: 87px;
  background: #f2f3ef;
  box-shadow: 0 1px 3px #aaa;
}
.group {
  position: relative;
  display: flex;
  flex-direction: column;
}
.group::after {
  content: "";
  position: absolute;
  right: 0;
  top: 1px;
  bottom: 4px;
  width: 1px;
  background: #b9bab7;
}
.g-shapes { width: 181px; }
.g-styles { width: 324px; z-index: 3; }
.g-art { width: 112px; }
.g-text { width: 145px; }
.g-alt { width: 72px; }
.g-org { width: 277px; }
.g-size { width: 103px; }
.content {
  display: flex;
  height: 71px;
}
.g-styles::after {
  z-index: -1;
}
.caption {
  position: relative;
  display: flex;
  justify-content: center;
}
.g-art .caption {
  padding-right: 22px;
  white-space: nowrap;
}
.launcher {
  position: absolute;
  right: 3px;
  top: 4px;
  color: #777;
}
.gallery {
  display: flex;
  height: 58px;
  margin: 3px 6px 0 8px;
  border: 1px solid #c8c8c8;
  background: #fff;
}
.shapes {
  display: grid;
  grid-template-columns: repeat(6, 19px);
  grid-auto-rows: 19px;
}
.shapes svg, .edit svg {
  fill: none;
  stroke: #444;
}
.window .blue {
  fill: none;
  stroke: #2787b5;
}
.window .dots {
  fill: #2787b5;
  stroke: none;
}
.window .gold {
  fill: #fcd77f;
  stroke: #d08b20;
}
.arch {
  stroke-width: 2.5;
}
.scroll {
  display: grid;
  grid-template-rows: repeat(3, 1fr);
  width: 13px;
  border-left: 1px solid #c0c0c0;
  background: #f2f3ef;
}
.scroll button {
  display: grid;
  place-items: center;
}
.scroll button + button {
  border-top: 1px solid #c0c0c0;
}
.more .chev {
  border-top: 1px solid #444;
}
.off {
  color: #a6a6a6;
}
.row {
  display: flex;
  align-items: center;
  gap: 3px;
  height: 22px;
}
.g-styles .gallery {
  height: 56px;
  margin: 3px 2px 0 9px;
}
.slot {
  display: grid;
  place-items: center;
  width: 53px;
}
.chosen {
  border: 3px solid #c3c3c3;
}
.preset {
  width: 36px;
  height: 36px;
  padding-bottom: 4px;
  border: 1px solid #7cb35b;
  border-radius: 5px;
  background: #fff;
  color: #222;
  font-size: 10px;
}
.black { background: #000; color: #fff; border-color: #000; }
.fill { background: #4472c4; color: #fff; border-color: #2f528f; }
.filler {
  position: relative;
  z-index: 1;
  height: 21px;
}
.fillbtn {
  display: flex;
  align-items: center;
  gap: 2px;
  width: 119px;
  height: 21px;
  padding-left: 2px;
  background: #c5c5c5;
  color: #333;
}

/* fill menu */
.menu {
  position: absolute;
  left: -1px;
  top: 22px;
  width: 179px;
  padding-bottom: 2px;
  border: 1px solid #c6c6c6;
  background: #fff;
  box-shadow: 1px 2px 4px #bbb;
  color: #333;
}
.menu h3 {
  height: 30px;
  margin: 0;
  padding-left: 13px;
  color: #222;
  font: 700 11px/28px "Open Sans", "Noto Sans", sans-serif;
}
.menu hr {
  height: 1px;
  margin: 0 1px;
  border: 0;
  background: #dcdcdc;
}
.swatches, .shades {
  display: flex;
  gap: 5px;
  padding: 0 3px;
}
.swatches {
  margin-bottom: 13px;
}
.std {
  margin-bottom: 11px;
}
.swatches button {
  width: 11px;
  height: 11px;
  box-shadow: inset 0 0 0 1px #0001;
}
.swatches .picked {
  border: 1px solid #f3d3a8;
  outline: 1px solid #b0683c;
}
.shades {
  position: relative;
  margin-bottom: 12px;
}
.shades button {
  display: block;
  width: 11px;
  height: 12px;
}
.shades .hot {
  border: 1px solid #f6d97a;
  outline: 1px solid #c77f1c;
}
.cursor {
  position: absolute;
  left: 151px;
  top: 43px;
}
.item {
  display: flex;
  align-items: center;
  width: 100%;
  height: 26px;
  padding-left: 12px;
  gap: 8px;
}
.none {
  height: 28px;
  color: #777;
}
.empty {
  width: 15px;
  height: 15px;
  border: 1px solid #ddd;
}
.items {
  padding-top: 1px;
}
.go {
  margin: 0 7px 0 auto;
  fill: none;
  stroke: #555;
}

/* remaining groups */
.big {
  display: flex;
  flex-direction: column;
  align-items: center;
  line-height: 15px;
}
.g-art .big {
  width: 66px;
  padding-top: 5px;
  padding-left: 8px;
}
.g-art .row {
  gap: 4px;
}
.rows {
  flex: none;
}
.row svg, .size svg {
  fill: none;
  stroke: currentColor;
}
.letters .ring { stroke: #999; stroke-width: 3; }
.letters .core { stroke: #fff; }
.letters .glow { stroke: #b5d7ee; stroke-width: 5; }
.letters .ink { stroke: #2373b5; stroke-width: 3; }
.g-text .rows {
  padding-left: 9px;
}
.g-alt .content {
  justify-content: center;
}
.g-alt .big {
  padding-top: 7px;
}
.c1 { width: 110px; padding-left: 11px; }
.c2 { width: 119px; padding-left: 11px; }
.c3 { padding-left: 11px; }
.c1 .row, .c2 .row { gap: 2px; }
.mid { margin-left: 5px; }
.g-size .content {
  flex-direction: column;
  gap: 9px;
  padding: 8px 7px 0 11px;
}
.size {
  display: flex;
  align-items: center;
}
.size input {
  flex: 1;
  min-width: 0;
  height: 21px;
  margin-left: 2px;
  padding-left: 2px;
  border: 1px solid #c6c6c6;
  border-right: 0;
  background: #fff;
}
.spin {
  display: grid;
  width: 18px;
  height: 21px;
  border: 1px solid #c6c6c6;
  border-left: 0;
  background: #fff;
}
.spin button {
  display: grid;
  place-items: center;
}
.collapse {
  align-self: flex-end;
  margin: 0 7px 3px auto;
}
.collapse svg {
  fill: none;
  stroke: #444;
}

/* document */
.canvas {
  position: relative;
  flex: 1;
  display: flex;
  justify-content: center;
  padding: 15px 15px 0 0;
}
.page {
  position: relative;
  width: 685px;
  padding-top: 74px;
  border: 1px solid #d2d2d2;
  border-bottom: 0;
  background: #fff;
  color: #111;
  font: 500 19px/36px "Comic Sans MS", "Comic Neue", "Open Sans", sans-serif;
  text-align: center;
}
.page p {
  margin: 0;
}
.star {
  position: absolute;
  left: 91px;
  top: 199px;
}
.layout {
  position: absolute;
  left: 334px;
  top: 199px;
  display: grid;
  place-items: center;
  width: 27px;
  height: 26px;
  border: 1px solid #aaa;
  background: #fff;
}
.beside {
  position: absolute;
  right: 0;
  top: 290px;
  bottom: 0;
  width: 5px;
  background: #fff;
}

/* status bar */
.status {
  display: flex;
  align-items: center;
  height: 21px;
  padding: 0 12px 0 8px;
  border-top: 1px solid #c4c5bd;
  background: #f1f2ed;
}
.status > span {
  white-space: nowrap;
}
.status svg {
  fill: none;
  stroke: #444;
}
.status span + span {
  margin-left: 14px;
}
.proof {
  margin: 0 14px 0 12px;
}
.focus {
  display: flex;
  align-items: center;
  gap: 2px;
  margin: 0 10px 0 auto;
}
.view {
  display: grid;
  place-items: center;
  width: 38px;
  height: 20px;
}
.view.on {
  background: #c8c8c8;
}
.sign {
  margin-left: 5px;
}
.zoom {
  appearance: none;
  width: 93px;
  height: 12px;
  margin-left: 4px;
  background: linear-gradient(#999, #999) center / 100% 1px no-repeat;
}
.zoom::-webkit-slider-thumb {
  appearance: none;
  width: 4px;
  height: 10px;
  background: #666;
}
.status .percent {
  margin-left: 10px;
}

/* taskbar */
.taskbar {
  position: relative;
  display: flex;
  align-items: stretch;
  height: 37px;
  background: linear-gradient(#b9b9b9, #d5d5d5 4px);
}
.start {
  display: grid;
  place-items: center;
  width: 46px;
}
.ask {
  display: flex;
  align-items: center;
  gap: 11px;
  width: 322px;
  padding-left: 10px;
  border: solid #ccc;
  border-width: 1px 0;
  background: #fff;
  font-size: 14px;
}
.ask svg {
  fill: none;
  stroke: #222;
}
.ask input {
  flex: 1;
  min-width: 0;
}
.app {
  position: relative;
  display: grid;
  place-items: center;
  width: 46px;
}
.run::after {
  content: "";
  position: absolute;
  left: 5px;
  right: 5px;
  bottom: 0;
  height: 2px;
  background: #1878c8;
}
.front {
  background: linear-gradient(90deg, #f2f2f2 42px, #c9c9c9 42px 43px, #e2e2e2 43px);
}
.front::after, .orange::after {
  left: 0;
  right: 0;
}
.orange {
  background: #efa777;
}
.orange::after {
  background: #f2661c;
}
.help {
  display: grid;
  place-items: center;
  width: 21px;
  height: 21px;
  border: 1px solid #eaf6fa;
  border-radius: 50%;
  background: #139cc4;
  color: #fff;
  font: 700 17px/19px "Open Sans", sans-serif;
}
.small {
  width: 20px;
  height: 20px;
}
.tray {
  display: flex;
  align-items: center;
  gap: 7px;
  margin-left: auto;
  padding-right: 22px;
  color: #222;
}
.line {
  fill: none;
  stroke: #222;
}
.small + .line {
  margin: 0 2px 0 5px;
}
.lang {
  margin-left: 3px;
}
.clock {
  margin: 0 8px 0 4px;
  text-align: center;
}
</style>
